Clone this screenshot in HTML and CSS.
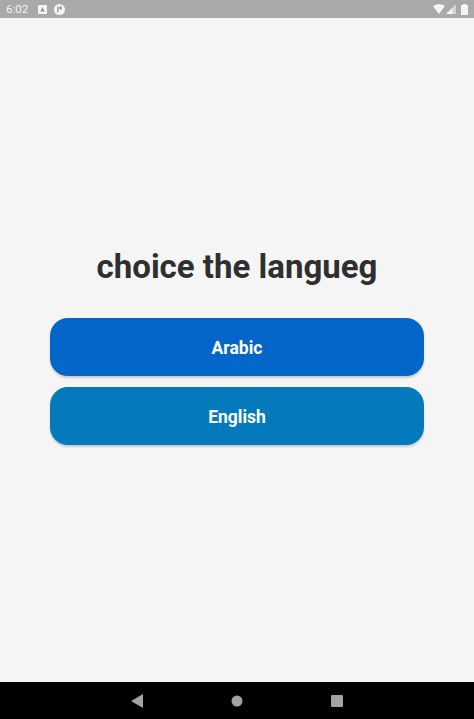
FILE: index.html
```html
<!DOCTYPE html>
<html lang="en">
<head>
    <meta name="viewport" content="width=device-width, initial-scale=1.0" />
    <title>Choice the language</title>
    <link rel="stylesheet" href="styles.css">
</head>
<body>
    <!-- status bar -->
    <header class="status-bar">
        <div class="status-left">
            <span class="clock">6:02</span>
            <svg class="note-icon" width="9" height="9" viewBox="0 0 9 9">
                <rect width="9" height="9" rx="1" fill="#f4f4f4"/>
                <path d="M4.5 2 L6.6 7 H5.6 L5.2 6 H3.8 L3.4 7 H2.4 Z" fill="#8a8a8a"/>
            </svg>
            <svg class="note-icon" width="11" height="11" viewBox="0 0 11 11">
                <circle cx="5.5" cy="5.5" r="5.5" fill="#f4f4f4"/>
                <path d="M3.2 2.6 H4.6 V8.6 H3.2 Z M5.4 2.6 H8 V5.6 H5.4 Z" fill="#9a9a9a"/>
            </svg>
        </div>
        <div class="status-right">
            <svg width="12" height="10" viewBox="0 0 14 10" preserveAspectRatio="none">
                <path d="M0 2 Q7 -2 14 2 L7 10 Z" fill="#f4f4f4"/>
            </svg>
            <svg width="10" height="10" viewBox="0 0 10 10">
                <path d="M10 0 V10 H0 Z" fill="#d4d4d4"/>
                <path d="M6.5 4 V10 H0 Z" fill="#f4f4f4"/>
            </svg>
            <svg class="battery" width="7" height="11" viewBox="0 0 7 11">
                <path d="M2 0 H5 V1 H7 V11 H0 V1 H2 Z" fill="#f4f4f4"/>
            </svg>
        </div>
    </header>

    <main class="content">
        <h1 class="title">choice the langueg</h1>
        <button class="lang-button arabic">Arabic</button>
        <button class="lang-button english">English</button>
    </main>

    <!-- android nav bar -->
    <footer class="nav-bar">
        <svg width="12" height="14" viewBox="0 0 12 14"><path d="M12 0 V14 L0 7 Z" fill="#a3a3a3"/></svg>
        <svg width="12" height="12" viewBox="0 0 12 12"><circle cx="6" cy="6" r="5.5" fill="#a3a3a3"/></svg>
        <svg width="12" height="12" viewBox="0 0 12 12"><rect width="12" height="12" rx="1" fill="#a3a3a3"/></svg>
    </footer>
</body>
</html>
```

FILE: styles.css
```css
body {
    margin: 0;
    height: 719px;
    display: flex;
    flex-direction: column;
    background-color: #f5f5f5;
    font-family: Roboto, Arial, sans-serif;
    overflow: hidden;
}

.status-bar {
    height: 18px;
    padding: 0 6px 0 6px;
    background-color: #a9a9a9;
    display: flex;
    justify-content: space-between;
    align-items: center;
    flex-shrink: 0;
}
.status-left {
    display: flex;
    align-items: center;
}
.clock {
    color: #f4f4f4;
    font-size: 11.5px;
    margin-right: 10px;
}
.note-icon {
    margin-right: 7px;
}
.status-right {
    display: flex;
    align-items: center;
    gap: 1px;
}
.battery {
    margin-left: 4px;
}

.content {
    flex: 1;
    display: flex;
    flex-direction: column;
    align-items: center;
    padding-top: 224px;
}
.title {
    margin: 0 0 27px;
    height: 49px;
    line-height: 49px;
    font-size: 33px;
    font-weight: 700;
    color: #2f2f2f;
}
.lang-button {
    width: 374px;
    height: 58px;
    margin-bottom: 11px;
    padding: 2px 0 0;
    border: none;
    border-radius: 18px;
    color: white;
    font-family: inherit;
    font-size: 17.5px;
    font-weight: 700;
    box-shadow: 0 2px 2px rgba(0, 0, 0, 0.18);
}
.arabic {
    background-color: #0466c8;
}
.english {
    background-color: #0479bb;
}

.nav-bar {
    height: 37px;
    background-color: #000;
    display: flex;
    justify-content: center;
    align-items: center;
    gap: 88px;
    flex-shrink: 0;
}
```
